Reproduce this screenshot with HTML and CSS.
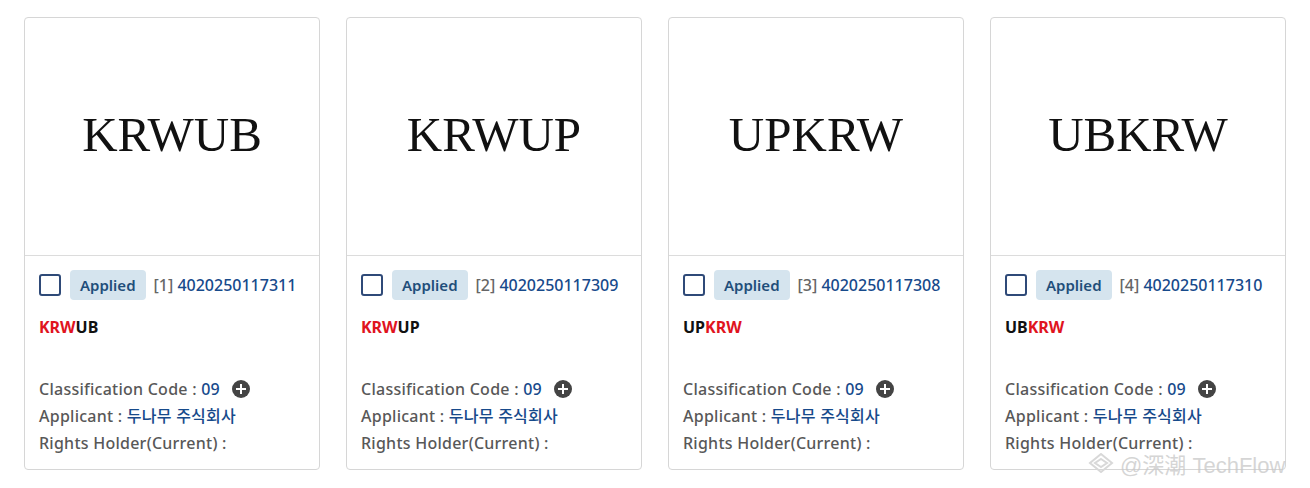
FILE: index.html
```html
<!DOCTYPE html>
<html lang="ko">
<head>
  <meta charset="UTF-8">
  <title>Trademark search results</title>
  <link rel="stylesheet" href="styles.css">
</head>
<body>
  <div id="resultaten">

    <div class="kaart">
      <div class="merkbeeld"><span>KRWUB</span></div>
      <div class="info">
        <div class="kop">
          <span class="vinkje"></span>
          <span class="status">Applied</span>
          <span class="nummer"><span class="volg">[1]</span> 4020250117311</span>
        </div>
        <p class="merknaam"><span class="rood">KRW</span>UB</p>
        <p class="regel">Classification Code : <span class="blauw">09</span> <span class="plus"></span></p>
        <p class="regel">Applicant : <span class="blauw">두나무 주식회사</span></p>
        <p class="regel">Rights Holder(Current) :</p>
      </div>
    </div>

    <div class="kaart">
      <div class="merkbeeld"><span>KRWUP</span></div>
      <div class="info">
        <div class="kop">
          <span class="vinkje"></span>
          <span class="status">Applied</span>
          <span class="nummer"><span class="volg">[2]</span> 4020250117309</span>
        </div>
        <p class="merknaam"><span class="rood">KRW</span>UP</p>
        <p class="regel">Classification Code : <span class="blauw">09</span> <span class="plus"></span></p>
        <p class="regel">Applicant : <span class="blauw">두나무 주식회사</span></p>
        <p class="regel">Rights Holder(Current) :</p>
      </div>
    </div>

    <div class="kaart">
      <div class="merkbeeld"><span>UPKRW</span></div>
      <div class="info">
        <div class="kop">
          <span class="vinkje"></span>
          <span class="status">Applied</span>
          <span class="nummer"><span class="volg">[3]</span> 4020250117308</span>
        </div>
        <p class="merknaam">UP<span class="rood">KRW</span></p>
        <p class="regel">Classification Code : <span class="blauw">09</span> <span class="plus"></span></p>
        <p class="regel">Applicant : <span class="blauw">두나무 주식회사</span></p>
        <p class="regel">Rights Holder(Current) :</p>
      </div>
    </div>

    <div class="kaart">
      <div class="merkbeeld"><span>UBKRW</span></div>
      <div class="info">
        <div class="kop">
          <span class="vinkje"></span>
          <span class="status">Applied</span>
          <span class="nummer"><span class="volg">[4]</span> 4020250117310</span>
        </div>
        <p class="merknaam">UB<span class="rood">KRW</span></p>
        <p class="regel">Classification Code : <span class="blauw">09</span> <span class="plus"></span></p>
        <p class="regel">Applicant : <span class="blauw">두나무 주식회사</span></p>
        <p class="regel">Rights Holder(Current) :</p>
      </div>
    </div>

  </div>

  <!-- watermerk rechtsonder -->
  <div class="watermerk">
    <svg width="26" height="20" viewBox="0 0 26 20">
      <path d="M13 1 L24 10 L13 19 L2 10 Z M13 6 L19 10 L13 14 L7 10 Z" fill="none" stroke="#d8d8d8" stroke-width="2"/>
    </svg>
    <span>@深潮 TechFlow</span>
  </div>
</body>
</html>
```

FILE: styles.css
```css
body {
  margin: 0;
  background: #fff;
  font-family: "Noto Sans", "Noto Sans CJK KR", sans-serif;
  color: #333;
}

#resultaten {
  display: flex;
  gap: 26px;
  padding: 17px 0 0 24px;
}

.kaart {
  width: 296px;
  height: 453px;
  box-sizing: border-box;
  border: 1px solid #d6d6d6;
  border-radius: 4px;
  display: flex;
  flex-direction: column;
}

.merkbeeld {
  height: 238px;
  border-bottom: 1px solid #dcdcdc;
  display: flex;
  align-items: center;
  justify-content: center;
  font-family: "Liberation Serif", serif;
  font-size: 49px;
  color: #111;
  padding-bottom: 4px;
  box-sizing: border-box;
}

.info {
  padding: 14px 14px 0 14px;
}

.kop {
  display: flex;
  align-items: center;
  height: 30px;
}

.vinkje {
  width: 18px;
  height: 18px;
  border: 2px solid #2f4a78;
  border-radius: 3px;
  margin-right: 9px;
}

.status {
  background: #d5e4ee;
  color: #1f4e7a;
  font-weight: 600;
  font-size: 15px;
  border-radius: 4px;
  padding: 4px 10px;
  line-height: 22px;
  margin-right: 8px;
}

.nummer {
  font-size: 16px;
  font-weight: 500;
  color: #174a8b;
}

.volg {
  color: #666;
}

.merknaam {
  margin: 17px 0 0 0;
  font-size: 16px;
  font-weight: bold;
  color: #111;
  line-height: 20px;
}

.rood {
  color: #e0141e;
}

.merknaam + .regel {
  margin-top: 39px;
}

.regel {
  margin: 0;
  font-size: 16px;
  font-weight: 500;
  line-height: 27px;
  letter-spacing: 0.25px;
  color: #585858;
}

.blauw {
  color: #174a8b;
}

.plus {
  display: inline-block;
  width: 18px;
  height: 18px;
  border-radius: 50%;
  background: #444;
  vertical-align: -3px;
  margin-left: 8px;
  position: relative;
}

.plus::before,
.plus::after {
  content: "";
  position: absolute;
  background: #fff;
  left: 8px;
  top: 4px;
  width: 2px;
  height: 10px;
}

.plus::after {
  left: 4px;
  top: 8px;
  width: 10px;
  height: 2px;
}

.watermerk {
  position: absolute;
  left: 1088px;
  top: 447px;
  display: flex;
  align-items: center;
  gap: 6px;
  color: rgba(200, 200, 200, 0.75);
  font-size: 22px;
  font-family: "Liberation Sans", "Noto Sans CJK SC", sans-serif;
}
```
